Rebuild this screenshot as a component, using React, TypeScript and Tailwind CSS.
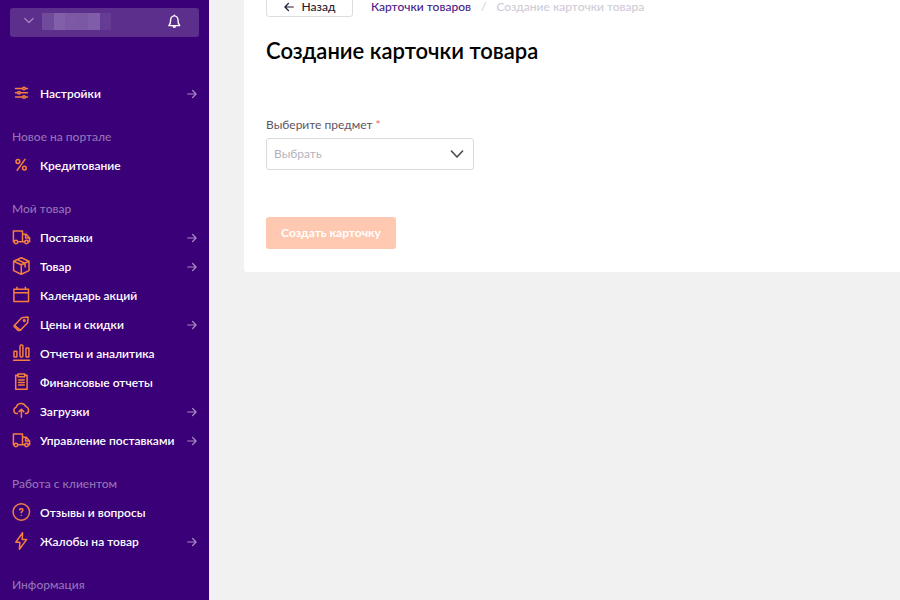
import type { ReactNode } from "react";

function Icon({ children }: { children: ReactNode }) {
  return (
    <svg
      className="size-5 shrink-0 text-[#f5803e]"
      viewBox="0 0 20 20"
      fill="none"
      stroke="currentColor"
      strokeWidth={1.5}
      strokeLinecap="round"
      strokeLinejoin="round"
      aria-hidden="true"
    >
      {children}
    </svg>
  );
}

function Arrow({ className }: { className: string }) {
  return (
    <svg
      className={className}
      viewBox="0 0 10 10"
      fill="none"
      stroke="currentColor"
      strokeWidth={1.2}
      strokeLinecap="round"
      strokeLinejoin="round"
      aria-hidden="true"
    >
      <path d="M.7 5h8.4M5.6 1.5 9.1 5 5.6 8.5" />
    </svg>
  );
}

const settings = (
  <Icon>
    <path d="M4.5 5.5h7M14.6 5.5h1.9M4.5 9.8h1.9M9.4 9.8h7.1M4.5 14h7M14.6 14h1.9" />
    <circle cx="13" cy="5.5" r="1.3" />
    <circle cx="8" cy="9.8" r="1.3" />
    <circle cx="13" cy="14" r="1.3" />
  </Icon>
);

const percent = (
  <Icon>
    <path d="M14 4.4 6.2 15.2" />
    <circle cx="6.9" cy="6.5" r="1.9" />
    <circle cx="13.4" cy="13.1" r="1.9" />
  </Icon>
);

const truck = (
  <Icon>
    <path d="M3 14.8H2.4V4h9.1v10.8H6.8M11.5 7.2h3.7l3.4 3.8v3.8h-1.2M13.6 14.8h-2.1M14.6 7.4v3.7h4" />
    <circle cx="5" cy="15" r="1.7" />
    <circle cx="15.5" cy="15" r="1.7" />
  </Icon>
);

const box = (
  <Icon>
    <path d="m10.3 1.8 7.7 3.4v9.4l-7.7 3.6-7.7-3.6V5.2zM2.6 5.2l7.7 3.6L18 5.2M10.3 8.8v9.4M6.3 3.6l7.8 3.6v3.9" />
  </Icon>
);

const calendar = (
  <Icon>
    <path d="M2.9 4.2h14.6v12.4H2.9zM2.9 7.8h14.6M6 2.2v2M14.4 2.2v2" />
  </Icon>
);

const tag = (
  <Icon>
    <path d="m3.6 11.2 7.2-7.4 5.8-.9.6.6-.6 5.2-7.2 7.5z" />
    <path d="m3.6 11.2-.6 1 4.4 4.4 2-.4" />
    <circle cx="13.3" cy="6.6" r=".8" />
  </Icon>
);

const chart = (
  <Icon>
    <path d="M2.6 17.2h16" />
    <rect x="3" y="8.2" width="2.9" height="5.9" rx=".4" />
    <rect x="9" y="2" width="2.9" height="12.1" rx="1" />
    <rect x="15" y="5" width="2.9" height="9.1" rx=".6" />
  </Icon>
);

const clipboard = (
  <Icon>
    <path d="M7 3.3H4.7v14h11.4v-14h-2.3M7.6 7.9h5.6M7.6 10.5h5.6M7.6 13.1h5.6" />
    <rect x="7" y="1.9" width="6.8" height="2.8" />
  </Icon>
);

const upload = (
  <Icon>
    <path d="M6.4 12.6H5.6a3.2 3.2 0 0 1-.5-6.2 5.2 5.2 0 0 1 9.8-.8 3.7 3.7 0 0 1 .4 7h-.9M10.4 16.2V8.6M8 10.6l2.4-2.4 2.4 2.4" />
  </Icon>
);

const question = (
  <Icon>
    <circle cx="10.3" cy="10" r="8.2" />
    <path d="M8.6 7.7c.5-1.5 3.5-1.2 3.3.5-.1 1.1-1.7 1.2-1.7 2.6M10.2 13.2v.1" />
  </Icon>
);

const bolt = (
  <Icon>
    <path d="M11.6 1.8 4.8 11.2h4.1L8.4 18.2 15.6 8.6h-4.4z" />
  </Icon>
);

type Item = { label: string; icon: ReactNode; more?: boolean };

const sections: { title?: string; items: Item[] }[] = [
  { items: [{ label: "Настройки", icon: settings, more: true }] },
  { title: "Новое на портале", items: [{ label: "Кредитование", icon: percent }] },
  {
    title: "Мой товар",
    items: [
      { label: "Поставки", icon: truck, more: true },
      { label: "Товар", icon: box, more: true },
      { label: "Календарь акций", icon: calendar },
      { label: "Цены и скидки", icon: tag, more: true },
      { label: "Отчеты и аналитика", icon: chart },
      { label: "Финансовые отчеты", icon: clipboard },
      { label: "Загрузки", icon: upload, more: true },
      { label: "Управление поставками", icon: truck, more: true },
    ],
  },
  {
    title: "Работа с клиентом",
    items: [
      { label: "Отзывы и вопросы", icon: question },
      { label: "Жалобы на товар", icon: bolt, more: true },
    ],
  },
  { title: "Информация", items: [] },
];

function Sidebar() {
  return (
    <aside className="w-[209px] shrink-0 bg-[#3a0078] pt-2">
      <div className="mx-[10px] flex h-[29px] items-center rounded-[3px] bg-[#5c2f8d] pr-4 pb-[3px] pl-[14px]">
        <button type="button" aria-label="Профиль" className="flex items-center gap-2">
          <svg
            className="size-[10px] text-[#a386c0]"
            viewBox="0 0 10 10"
            fill="none"
            stroke="currentColor"
            strokeWidth={1.2}
            strokeLinecap="round"
            strokeLinejoin="round"
            aria-hidden="true"
          >
            <path d="m.8 2.5 4.2 4 4.2-4" />
          </svg>
          <span className="flex h-[17px]">
            <span className="w-3 bg-[#704a9b]" />
            <span className="w-[11px] bg-[#8260a9]" />
            <span className="w-3 bg-[#7d59a5]" />
            <span className="w-[11px] bg-[#7b57a4]" />
            <span className="w-3 bg-[#805da8]" />
            <span className="w-[11px] bg-[#663b94]" />
          </span>
        </button>
        <button type="button" aria-label="Уведомления" className="ml-auto">
          <svg
            className="size-4 text-white"
            viewBox="0 0 16 16"
            fill="none"
            stroke="currentColor"
            strokeWidth={1.4}
            strokeLinecap="round"
            strokeLinejoin="round"
            aria-hidden="true"
          >
            <path d="M1.9 12.6h10.8c-1.5-1.4-1.7-2.5-1.7-5.3 0-2.5-1.4-4.4-3.7-4.4S3.6 4.8 3.6 7.3c0 2.8-.2 3.9-1.7 5.3zM7.3 2.6v-.5M6.1 13c.2 1.8 2.2 1.8 2.4 0" />
          </svg>
        </button>
      </div>
      <nav className="mt-[42px] flex flex-col gap-[14px] pr-3 pl-[11px] font-semibold">
        {sections.map((section, i) => (
          <div key={i}>
            {section.title && (
              <h2 className="h-[29px] pl-px leading-[29px] font-medium text-[#9472b5]">
                {section.title}
              </h2>
            )}
            <ul>
              {section.items.map((item) => (
                <li key={item.label}>
                  <a href="#" className="flex h-[29px] items-center text-white">
                    <span className="pb-[2px]">{item.icon}</span>
                    <span className="ml-[9px] whitespace-nowrap">{item.label}</span>
                    {item.more && <Arrow className="ml-auto size-[10px] text-[#a58bc2]" />}
                  </a>
                </li>
              ))}
            </ul>
          </div>
        ))}
      </nav>
    </aside>
  );
}

export default function App() {
  return (
    <div className="flex h-screen overflow-hidden bg-[#f1f1f1] font-[Lato,sans-serif] text-[12px] leading-4">
      <Sidebar />
      <main className="min-w-0 grow pl-[35px]">
        <section className="-mt-4 rounded-bl-[3px] bg-white px-[22px] pb-[23px]">
          <div className="flex items-center whitespace-nowrap">
            <button
              type="button"
              className="flex h-[33px] w-[87px] items-center justify-center gap-2 rounded-[3px] border border-[#dcdce2] pt-3 font-medium text-[#241a30]"
            >
              <Arrow className="size-[10px] rotate-180" />
              Назад
            </button>
            <nav className="flex pt-3 pl-[18px] font-medium" aria-label="Навигация">
              <a href="#" className="text-[#4a1a87]">
                Карточки товаров
              </a>
              <span className="px-[10px] text-[#d3d1d8]">/</span>
              <span className="text-[#cfccd6]">Создание карточки товара</span>
            </nav>
          </div>
          <h1 className="mt-5 text-[22px] leading-7 font-semibold text-black">
            Создание карточки товара
          </h1>
          <form>
            <label htmlFor="subject" className="mt-[52px] block text-[#5c5566]">
              Выберите предмет <span className="text-[#f4665c]">*</span>
            </label>
            <div className="relative mt-[5px] w-[208px]">
              <select
                id="subject"
                defaultValue=""
                className="h-8 w-full appearance-none rounded-[3px] border border-[#d9d9de] bg-white px-[7px] text-[#b5b2bc]"
              >
                <option value="">Выбрать</option>
              </select>
              <svg
                className="pointer-events-none absolute top-[9px] right-[10px] size-[14px] text-[#4a4a4f]"
                viewBox="0 0 14 14"
                fill="none"
                stroke="currentColor"
                strokeWidth={1.6}
                strokeLinecap="round"
                strokeLinejoin="round"
                aria-hidden="true"
              >
                <path d="m1.4 4 5.6 6 5.6-6" />
              </svg>
            </div>
            <button
              type="submit"
              disabled
              className="mt-[47px] h-8 w-[130px] rounded-[3px] bg-[#ffc8b0] font-bold text-white"
            >
              Создать карточку
            </button>
          </form>
        </section>
      </main>
    </div>
  );
}
